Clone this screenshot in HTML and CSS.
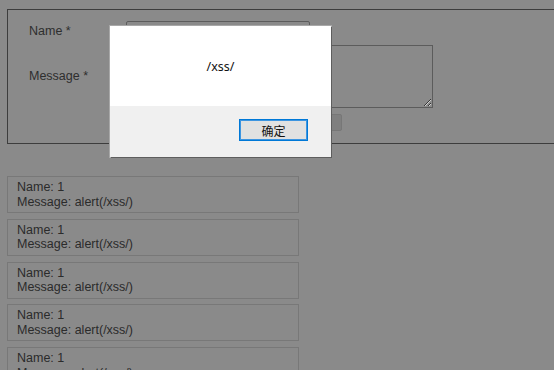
FILE: index.html
```html
<!DOCTYPE html>
<html>
<head>
<meta charset="utf-8">
<link rel="stylesheet" href="styles.css">
</head>
<body>
<div class="page">
  <form class="guestbook">
    <label class="lbl">Name *</label>
    <input class="field name" type="text">
    <label class="lbl">Message *</label>
    <textarea class="field msg"></textarea>
    <div></div>
    <div class="actions"><button class="submit" type="button">Submit</button></div>
  </form>
  <div class="comments">
    <div class="comment"><div>Name: 1</div><div>Message: alert(/xss/)</div></div>
    <div class="comment"><div>Name: 1</div><div>Message: alert(/xss/)</div></div>
    <div class="comment"><div>Name: 1</div><div>Message: alert(/xss/)</div></div>
    <div class="comment"><div>Name: 1</div><div>Message: alert(/xss/)</div></div>
    <div class="comment"><div>Name: 1</div><div>Message: alert(/xss/)</div></div>
  </div>
</div>
<div class="dialog">
  <div class="dialog-body">/xss/</div>
  <div class="dialog-foot"><button class="ok" type="button">确定</button></div>
</div>
</body>
</html>
```
FILE: styles.css
```css
html, body {
  margin: 0;
  padding: 0;
  width: 554px;
  height: 370px;
  overflow: hidden;
  background: #8a8a8a;
  font-family: "Liberation Sans", Arial, sans-serif;
  color: #2b2b2b;
}
.page {
  padding: 9px 0 0 7px;
}
.guestbook {
  width: 580px;
  box-sizing: border-box;
  border: 1px solid #3d3d3d;
  padding: 11px 0 12px 21px;
  display: grid;
  grid-template-columns: 97px auto;
  row-gap: 4px;
  align-items: center;
  font-size: 12.5px;
  line-height: 15px;
}
.lbl {
  color: #2e2e2e;
}
.field {
  box-sizing: border-box;
  background: transparent;
  margin: 0;
  font: inherit;
}
.name {
  width: 184px;
  height: 20px;
  border: 1px solid #5c5c5c;
  border-radius: 2px;
}
.msg {
  width: 307px;
  height: 63px;
  border: 1px solid #5c5c5c;
  display: block;
  resize: both;
}
.actions {
  padding-top: 2px;
}
.submit {
  margin-left: 160px;
  width: 56px;
  height: 17px;
  box-sizing: border-box;
  background: #7f7f7f;
  border: 1px solid #777;
  border-radius: 2px;
  color: #444;
  font: 11px "Liberation Sans", Arial, sans-serif;
  padding: 0;
}
.comments {
  margin-top: 32px;
  display: flex;
  flex-direction: column;
  gap: 5.75px;
}
.comment {
  width: 292px;
  box-sizing: border-box;
  border: 1px solid #787878;
  padding: 3px 9px;
  font-size: 12.5px;
  line-height: 14.5px;
  color: #2b2b2b;
}
.dialog {
  position: absolute;
  left: 110px;
  top: 26px;
  width: 221px;
  height: 131px;
  background: #f0f0f0;
  box-shadow: 1px 1px 0 #5e5e5e, 0 0 0 1px #a8a8a8;
  display: flex;
  flex-direction: column;
}
.dialog-body {
  height: 80px;
  background: #ffffff;
  display: flex;
  align-items: center;
  justify-content: center;
  font-family: "Noto Sans", "Liberation Sans", sans-serif;
  font-size: 12.5px;
  color: #111;
}
.dialog-foot {
  flex: 1;
  display: flex;
  justify-content: flex-end;
  align-items: flex-start;
  padding: 13px 23px 0 0;
}
.ok {
  width: 69px;
  height: 22px;
  box-sizing: border-box;
  background: #e1e1e1;
  border: 1px solid #0078d7;
  box-shadow: inset 0 0 0 1px #3d95e0;
  border-radius: 0;
  padding: 0;
  font-family: "Noto Sans CJK SC", sans-serif;
  font-size: 12px;
  color: #111;
}
```
